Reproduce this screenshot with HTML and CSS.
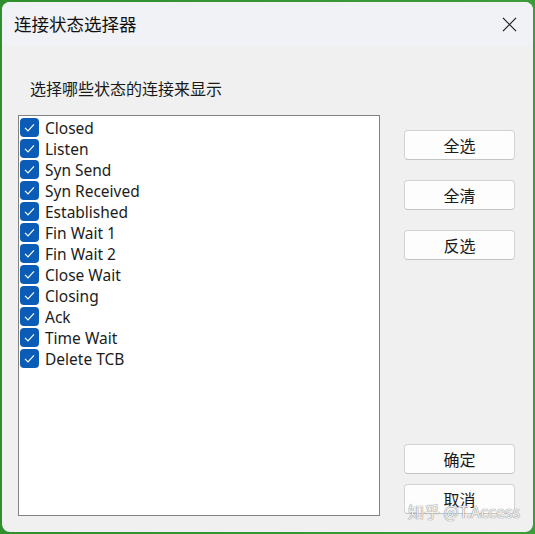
FILE: index.html
```html
<!DOCTYPE html>
<html lang="zh-CN">
<head>
<meta charset="utf-8">
<link rel="stylesheet" href="styles.css">
</head>
<body>
<div class="window">
  <div class="titlebar">
    <span class="title">连接状态选择器</span>
    <svg class="close" width="16" height="16" viewBox="0 0 16 16"><path d="M1 1 L15 15 M15 1 L1 15" stroke="#1b1b1b" stroke-width="1.3" fill="none"/></svg>
  </div>
  <div class="content">
    <div class="label">选择哪些状态的连接来显示</div>
    <div class="main">
      <div class="listbox">
        <div class="item"><span class="cb"><svg viewBox="0 0 19 19"><path d="M5 9.8 L8 12.8 L14 6.3" stroke="#fff" stroke-width="1.2" fill="none"/></svg></span>Closed</div>
        <div class="item"><span class="cb"><svg viewBox="0 0 19 19"><path d="M5 9.8 L8 12.8 L14 6.3" stroke="#fff" stroke-width="1.2" fill="none"/></svg></span>Listen</div>
        <div class="item"><span class="cb"><svg viewBox="0 0 19 19"><path d="M5 9.8 L8 12.8 L14 6.3" stroke="#fff" stroke-width="1.2" fill="none"/></svg></span>Syn Send</div>
        <div class="item"><span class="cb"><svg viewBox="0 0 19 19"><path d="M5 9.8 L8 12.8 L14 6.3" stroke="#fff" stroke-width="1.2" fill="none"/></svg></span>Syn Received</div>
        <div class="item"><span class="cb"><svg viewBox="0 0 19 19"><path d="M5 9.8 L8 12.8 L14 6.3" stroke="#fff" stroke-width="1.2" fill="none"/></svg></span>Established</div>
        <div class="item"><span class="cb"><svg viewBox="0 0 19 19"><path d="M5 9.8 L8 12.8 L14 6.3" stroke="#fff" stroke-width="1.2" fill="none"/></svg></span>Fin Wait 1</div>
        <div class="item"><span class="cb"><svg viewBox="0 0 19 19"><path d="M5 9.8 L8 12.8 L14 6.3" stroke="#fff" stroke-width="1.2" fill="none"/></svg></span>Fin Wait 2</div>
        <div class="item"><span class="cb"><svg viewBox="0 0 19 19"><path d="M5 9.8 L8 12.8 L14 6.3" stroke="#fff" stroke-width="1.2" fill="none"/></svg></span>Close Wait</div>
        <div class="item"><span class="cb"><svg viewBox="0 0 19 19"><path d="M5 9.8 L8 12.8 L14 6.3" stroke="#fff" stroke-width="1.2" fill="none"/></svg></span>Closing</div>
        <div class="item"><span class="cb"><svg viewBox="0 0 19 19"><path d="M5 9.8 L8 12.8 L14 6.3" stroke="#fff" stroke-width="1.2" fill="none"/></svg></span>Ack</div>
        <div class="item"><span class="cb"><svg viewBox="0 0 19 19"><path d="M5 9.8 L8 12.8 L14 6.3" stroke="#fff" stroke-width="1.2" fill="none"/></svg></span>Time Wait</div>
        <div class="item"><span class="cb"><svg viewBox="0 0 19 19"><path d="M5 9.8 L8 12.8 L14 6.3" stroke="#fff" stroke-width="1.2" fill="none"/></svg></span>Delete TCB</div>
      </div>
      <div class="buttons">
        <div class="btn">全选</div>
        <div class="btn">全清</div>
        <div class="btn">反选</div>
        <div class="btn ok">确定</div>
        <div class="btn cancel">取消</div>
      </div>
    </div>
  </div>
  <div class="watermark">知乎 @T.Access</div>
</div>
</body>
</html>
```
FILE: styles.css
```css
html, body {
  margin: 0;
  padding: 0;
}
body {
  width: 535px;
  height: 534px;
  background: linear-gradient(90deg, #2f8f2f 0, #3a9d3a 100%);
  font-family: "Noto Sans", "Noto Sans CJK SC", sans-serif;
  color: #1a1a1a;
  overflow: hidden;
}
.window {
  position: relative;
  margin: 2px 2px 0 2px;
  width: 531px;
  height: 530px;
  background: #f0f0f0;
  border-radius: 8px;
  display: flex;
  flex-direction: column;
  box-sizing: border-box;
  overflow: hidden;
}
.titlebar {
  height: 44px;
  background: #f1f2f5;
  display: flex;
  align-items: center;
  justify-content: space-between;
  padding: 0 16px 0 12px;
  flex-shrink: 0;
}
.title {
  font-family: "Noto Sans CJK SC", sans-serif;
  font-size: 17.5px;
  line-height: 24px;
  color: #111;
}
.close {
  width: 15px;
  height: 15px;
  margin-top: 1px;
}
.content {
  flex: 1;
  display: flex;
  flex-direction: column;
  padding: 32px 18px 14px 16px;
}
.label {
  font-family: "Noto Sans CJK SC", sans-serif;
  font-size: 16px;
  line-height: 20px;
  margin-left: 12px;
  height: 20px;
  color: #1a1a1a;
}
.main {
  margin-top: 17px;
  display: flex;
  gap: 24px;
  flex: 1;
}
.listbox {
  width: 362px;
  height: 401px;
  box-sizing: border-box;
  border: 1px solid #828282;
  background: #fff;
  padding: 1px 1px;
}
.item {
  height: 21px;
  display: flex;
  align-items: center;
  font-size: 15.5px;
  color: #1c1c1c;
  gap: 6px;
}
.cb {
  width: 19px;
  height: 19px;
  border-radius: 4px;
  background: #0a5cb6;
  display: flex;
  flex-shrink: 0;
}
.cb svg {
  width: 19px;
  height: 19px;
}
.buttons {
  display: flex;
  flex-direction: column;
  gap: 20px;
  padding-top: 15px;
  padding-bottom: 2px;
  width: 111px;
  height: 401px;
  box-sizing: border-box;
}
.btn {
  height: 30px;
  flex-shrink: 0;
  box-sizing: border-box;
  border: 1px solid #d3d3d3;
  border-bottom-color: #c4c4c4;
  border-radius: 4px;
  background: #fdfdfd;
  display: flex;
  align-items: center;
  justify-content: center;
  font-family: "Noto Sans CJK SC", sans-serif;
  font-size: 16px;
  color: #1a1a1a;
}
.btn.ok {
  margin-top: auto;
}
.btn.cancel {
  margin-top: -10px;
}
.watermark {
  position: absolute;
  left: 406px;
  top: 497px;
  font-family: "Noto Sans CJK SC", sans-serif;
  font-size: 16px;
  color: rgba(255, 255, 255, 0.9);
  text-shadow: 0 0 1px #777, 0 0 1px #999;
  white-space: nowrap;
}
```
